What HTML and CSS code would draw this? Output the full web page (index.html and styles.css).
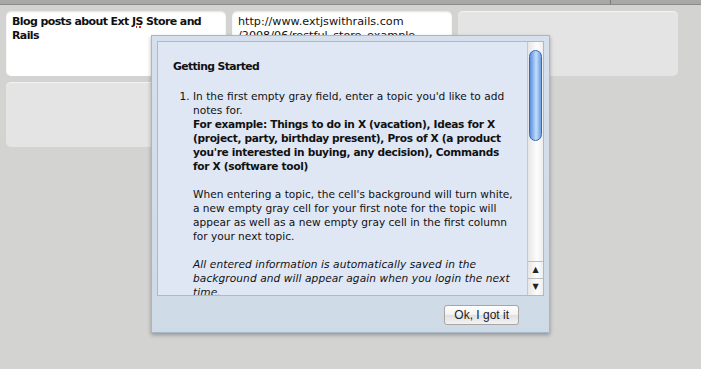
FILE: index.html
```html
<!DOCTYPE html>
<html lang="en">
<head>
    <meta charset="UTF-8">
    <title>Notes</title>
    <link rel="stylesheet" href="styles.css">
</head>
<body>
    <div class="topbar"><span class="divider"></span></div>

    <div class="board">
        <div class="cell filled title-cell">Blog posts about Ext <span class="typo">JS</span> Store and Rails</div>
        <div class="cell filled">http://www.extjswithrails.com /2008/06/restful_store_example</div>
        <div class="cell empty"></div>
        <div class="cell empty"></div>
    </div>

    <div class="dialog">
        <div class="dialog-body">
            <div class="dialog-text">
                <h3>Getting Started</h3>
                <ol>
                    <li>
                        In the first empty gray field, enter a topic you'd like to add notes for.<br>
                        <strong>For example: Things to do in X (vacation), Ideas for X (project, party, birthday present), Pros of X (a product you're interested in buying, any decision), Commands for X (software tool)</strong>
                        <p>When entering a topic, the cell's background will turn white, a new empty gray cell for your first note for the topic will appear as well as a new empty gray cell in the first column for your next topic.</p>
                        <p><em>All entered information is automatically saved in the background and will appear again when you login the next time.</em></p>
                    </li>
                </ol>
            </div>
            <div class="scrollbar">
                <div class="track"><div class="thumb"></div></div>
                <div class="arrow">&#9650;</div>
                <div class="arrow">&#9660;</div>
            </div>
        </div>
        <div class="dialog-footer">
            <button>Ok, I got it</button>
        </div>
    </div>
</body>
</html>
```

FILE: styles.css
```css
body {
    margin: 0;
    background: #d3d3d1;
    font-family: 'DejaVu Sans', sans-serif;
    font-size: 11px;
    color: #111;
    height: 369px;
    overflow: hidden;
    position: relative;
}

strong, h3, .title-cell {
    letter-spacing: -0.6px;
}

.dialog-text strong {
    letter-spacing: -0.33px;
}

em {
    letter-spacing: 0.08px;
}

.topbar {
    height: 4px;
    background: #a8a8a8;
    border-bottom: 1px solid #8c8c8c;
    position: relative;
}

.divider {
    position: absolute;
    left: 610px;
    top: 0;
    width: 1px;
    height: 4px;
    background: #7a7a7a;
}

.board {
    display: grid;
    grid-template-columns: repeat(3, 220px);
    grid-auto-rows: 65px;
    gap: 6px;
    padding: 6px;
}

.cell {
    border-radius: 5px;
    padding: 4px 6px;
    line-height: 14px;
    overflow: hidden;
}

.filled {
    background: #fff;
    box-shadow: inset 0 1px 2px rgba(0,0,0,0.12);
    font-size: 11.2px;
}

.title-cell {
    font-weight: bold;
    font-size: 11px;
}

.typo {
    text-decoration: underline dotted #e02020;
    text-decoration-thickness: 2px;
}

.empty {
    background: #e4e4e4;
    box-shadow: inset 0 1px 1px rgba(255,255,255,0.6);
}

.dialog {
    position: absolute;
    left: 151px;
    top: 35px;
    width: 399px;
    height: 298px;
    border: 1px solid #a7b6c9;
    background: linear-gradient(#d6e0ec, #cfdae7);
    box-shadow: 0 2px 4px rgba(0,0,0,0.3);
    padding: 5px 5px 0;
    box-sizing: border-box;
    display: flex;
    flex-direction: column;
}

.dialog-body {
    height: 255px;
    box-sizing: border-box;
    border: 1px solid #9fbbe3;
    background: #dfe7f5;
    display: flex;
}

.dialog-text {
    flex: 1;
    overflow: hidden;
    padding: 18px 13px 0 15px;
    line-height: 14px;
    font-size: 10.6px;
}

.dialog-text h3 {
    font-size: 10.8px;
    margin: 0 0 15px;
}

.dialog-text ol {
    margin: 0;
    padding-left: 20px;
}

.dialog-text p {
    margin: 14px 0 0;
}

.scrollbar {
    width: 15px;
    display: flex;
    flex-direction: column;
    background: linear-gradient(90deg, #e6e6e6, #fdfdfd 60%, #eee);
    border-left: 1px solid #c8c8c8;
}

.track {
    flex: 1;
    padding: 8px 1px 0;
}

.thumb {
    height: 91px;
    border-radius: 7px;
    border: 1px solid #3a66b8;
    background: linear-gradient(90deg, #5b8fdd, #a9cdfa 45%, #c5def9 55%, #6a9ee3);
    box-sizing: border-box;
}

.arrow {
    height: 16px;
    font-size: 8px;
    line-height: 16px;
    text-align: center;
    color: #222;
    border-top: 1px solid #bdbdbd;
}

.dialog-footer {
    flex: 1;
    display: flex;
    justify-content: flex-end;
    align-items: flex-start;
    padding: 9px 25px 0 0;
}

button {
    height: 20px;
    padding: 0 9px;
    font-family: 'Liberation Sans', Arial, sans-serif;
    font-size: 12px;
    color: #222;
    border: 1px solid #a5a5a5;
    border-radius: 3px;
    background: linear-gradient(#ffffff, #f2f2f2 50%, #e0e0e0 51%, #f3f3f3);
}
```
